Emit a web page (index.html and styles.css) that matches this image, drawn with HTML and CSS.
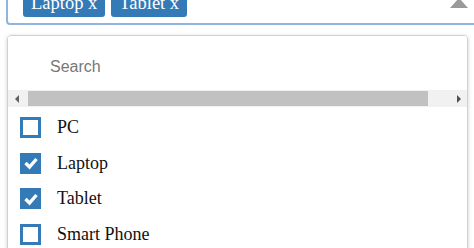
FILE: index.html
```html
<!DOCTYPE html>
<html lang="en">
<head>
    <meta charset="UTF-8">
    <meta name="viewport" content="width=device-width, initial-scale=1.0">
    <title>Device picker</title>

    <link rel="stylesheet" href="styles.css">

</head>
<body>
    <div class="picker">
        <!-- Selected values -->
        <div class="picker-box">
            <span class="picker-tag">Laptop x</span>
            <span class="picker-tag">Tablet x</span>
            <span class="picker-caret"></span>
        </div>

        <!-- Open dropdown -->
        <div class="picker-menu">
            <div class="picker-search">
                <input type="text" placeholder="Search">
            </div>

            <div class="hscroll">
                <div class="hscroll-btn"><span class="arrow-left"></span></div>
                <div class="hscroll-thumb"></div>
                <div class="hscroll-btn hscroll-btn-right"><span class="arrow-right"></span></div>
            </div>

            <div class="picker-list">
                <div class="picker-item">
                    <span class="picker-check"></span>PC
                </div>
                <div class="picker-item">
                    <span class="picker-check picker-check-on">
                        <svg viewBox="0 0 20 20" width="20" height="20"><path d="M4.5 10 L8.5 14 L15.5 6" fill="none" stroke="#fff" stroke-width="3.4"/></svg>
                    </span>Laptop
                </div>
                <div class="picker-item">
                    <span class="picker-check picker-check-on">
                        <svg viewBox="0 0 20 20" width="20" height="20"><path d="M4.5 10 L8.5 14 L15.5 6" fill="none" stroke="#fff" stroke-width="3.4"/></svg>
                    </span>Tablet
                </div>
                <div class="picker-item">
                    <span class="picker-check"></span>Smart Phone
                </div>
            </div>
        </div>
    </div>
</body>
</html>
```

FILE: styles.css
```css
body{
    margin: 0;
    overflow: hidden;
    background-color: #fff;
    font-family: "Liberation Serif", serif;
}

div.picker-box{
    box-sizing: border-box;
    display: flex;
    align-items: flex-start;
    width: 500px;
    height: 39px;
    margin-top: -14px;
    margin-left: 6px;
    padding: 2px 36px 0 15px;
    border: solid 2px #8fb4e3;
    border-radius: 4px;
}

span.picker-tag{
    background-color: #337ab7;
    color: #fff;
    font-size: 18.5px;
    line-height: 27px;
    padding: 0 8px;
    margin-right: 6px;
    border-radius: 3px;
}

span.picker-caret{
    margin-left: auto;
    margin-top: 8px;
    width: 0;
    height: 0;
    border-left: 9px solid transparent;
    border-right: 9px solid transparent;
    border-bottom: 10px solid #9a9a9a;
}

div.picker-menu{
    width: 461px;
    height: 240px;
    box-sizing: border-box;
    margin-top: 10px;
    margin-left: 7px;
    border: solid 1px #d0d0d0;
    border-radius: 4px;
    box-shadow: 0 1px 4px rgba(0,0,0,0.18);
    overflow: hidden;
}

div.picker-search input{
    box-sizing: border-box;
    width: 100%;
    height: 54px;
    border: 0;
    outline: none;
    padding: 8px 0 0 42px;
    font-family: "Liberation Sans", Arial, sans-serif;
    font-size: 16px;
    color: #333;
}

div.picker-search input::placeholder{
    color: #777;
}

/* Fake horizontal scrollbar */
div.hscroll{
    display: flex;
    align-items: center;
    height: 17px;
    background-color: #f1f1f1;
}

div.hscroll-btn{
    width: 17px;
    height: 17px;
    display: flex;
    align-items: center;
    justify-content: center;
}

div.hscroll-btn-right{
    margin-left: auto;
}

span.arrow-left{
    width: 0;
    height: 0;
    border-top: 4px solid transparent;
    border-bottom: 4px solid transparent;
    border-right: 4px solid #606060;
}

span.arrow-right{
    width: 0;
    height: 0;
    border-top: 4px solid transparent;
    border-bottom: 4px solid transparent;
    border-left: 4px solid #505050;
}

div.hscroll-thumb{
    width: 400px;
    height: 15px;
    margin-left: 3px;
    background-color: #c1c1c1;
}

div.picker-list{
    padding-top: 3px;
    padding-left: 12px;
}

div.picker-item{
    display: flex;
    align-items: center;
    height: 35.5px;
    font-size: 18px;
    color: #111;
}

span.picker-check{
    box-sizing: border-box;
    width: 21px;
    height: 21px;
    margin-right: 16px;
    border: solid 3px #337ab7;
    background-color: #fff;
    display: flex;
    align-items: center;
    justify-content: center;
}

span.picker-check-on{
    background-color: #337ab7;
}

span.picker-check svg{
    flex: none;
}
```
